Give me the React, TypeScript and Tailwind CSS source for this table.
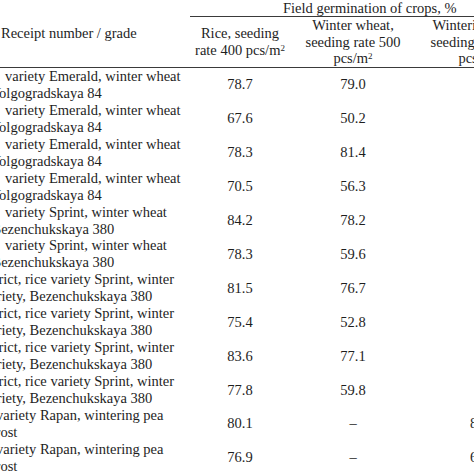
import React from "react";

type Row = {
  l1: string;
  m1: number;
  l2: string;
  m2: number;
  a: string;
  b: string;
  c: string;
};

const rows: Row[] = [
  { l1: "variety Emerald, winter wheat", m1: 5, l2: "Volgogradskaya 84", m2: -9.5, a: "78.7", b: "79.0", c: "" },
  { l1: "variety Emerald, winter wheat", m1: 5, l2: "Volgogradskaya 84", m2: -9.5, a: "67.6", b: "50.2", c: "" },
  { l1: "variety Emerald, winter wheat", m1: 5, l2: "Volgogradskaya 84", m2: -9.5, a: "78.3", b: "81.4", c: "" },
  { l1: "variety Emerald, winter wheat", m1: 5, l2: "Volgogradskaya 84", m2: -9.5, a: "70.5", b: "56.3", c: "" },
  { l1: "variety Sprint, winter wheat", m1: 5, l2: "Bezenchukskaya 380", m2: -8.5, a: "84.2", b: "78.2", c: "" },
  { l1: "variety Sprint, winter wheat", m1: 5, l2: "Bezenchukskaya 380", m2: -8.5, a: "78.3", b: "59.6", c: "" },
  { l1: "district, rice variety Sprint, winter", m1: -22.5, l2: "variety, Bezenchukskaya 380", m2: -17, a: "81.5", b: "76.7", c: "" },
  { l1: "district, rice variety Sprint, winter", m1: -22.5, l2: "variety, Bezenchukskaya 380", m2: -17, a: "75.4", b: "52.8", c: "" },
  { l1: "district, rice variety Sprint, winter", m1: -22.5, l2: "variety, Bezenchukskaya 380", m2: -17, a: "83.6", b: "77.1", c: "" },
  { l1: "district, rice variety Sprint, winter", m1: -22.5, l2: "variety, Bezenchukskaya 380", m2: -17, a: "77.8", b: "59.8", c: "" },
  { l1: "variety Rapan, wintering pea", m1: -4, l2: "Frost", m2: -12.5, a: "80.1", b: "–", c: "84.5" },
  { l1: "variety Rapan, wintering pea", m1: -4, l2: "Frost", m2: -12.5, a: "76.9", b: "–", c: "63.2" },
];

export default function App() {
  return (
    <div className="w-[474px] h-[474px] overflow-hidden bg-white text-[#1e1e1e] font-['Liberation_Serif','Times_New_Roman',serif] text-[14.5px] leading-[16.9px]">
      <div className="w-[560px]">
        {/* Header */}
        <div className="flex border-b border-[#3a3a3a] h-[68px]">
          <div className="w-[190px] shrink-0 flex items-center pl-[1px] whitespace-nowrap">
            Receipt number / grade
          </div>
          <div className="flex flex-col w-[344px] shrink-0">
            <div className="h-[17px] border-b border-[#3a3a3a] pl-[93px] whitespace-nowrap">
              Field germination of crops, %
            </div>
            <div className="flex h-[50px]">
              <div className="w-[100px] shrink-0 flex flex-col justify-center items-center text-center whitespace-nowrap">
                <div>Rice, seeding</div>
                <div>
                  rate 400 pcs/m<sup className="text-[9px]">2</sup>
                </div>
              </div>
              <div className="w-[126px] shrink-0 flex flex-col justify-center items-center text-center whitespace-nowrap">
                <div>Winter wheat,</div>
                <div>seeding rate 500</div>
                <div>
                  pcs/m<sup className="text-[9px]">2</sup>
                </div>
              </div>
              <div className="w-[118px] shrink-0 flex flex-col justify-center items-center text-center whitespace-nowrap pl-[6px]">
                <div>Wintering peas,</div>
                <div>seeding rate 120</div>
                <div>
                  pcs/m<sup className="text-[9px]">2</sup>
                </div>
              </div>
            </div>
          </div>
        </div>

        {/* Body */}
        {rows.map((r, i) => (
          <div key={i} className="flex h-[33.9px]">
            <div className="w-[190px] shrink-0 flex flex-col justify-center whitespace-nowrap">
              <div style={{ marginLeft: r.m1 }}>{r.l1}</div>
              <div style={{ marginLeft: r.m2 }}>{r.l2}</div>
            </div>
            <div className="w-[100px] shrink-0 flex items-center justify-center">{r.a}</div>
            <div className="w-[126px] shrink-0 flex items-center justify-center">{r.b}</div>
            <div className="w-[118px] shrink-0 flex items-center pl-[54px]">{r.c}</div>
          </div>
        ))}
      </div>
    </div>
  );
}
